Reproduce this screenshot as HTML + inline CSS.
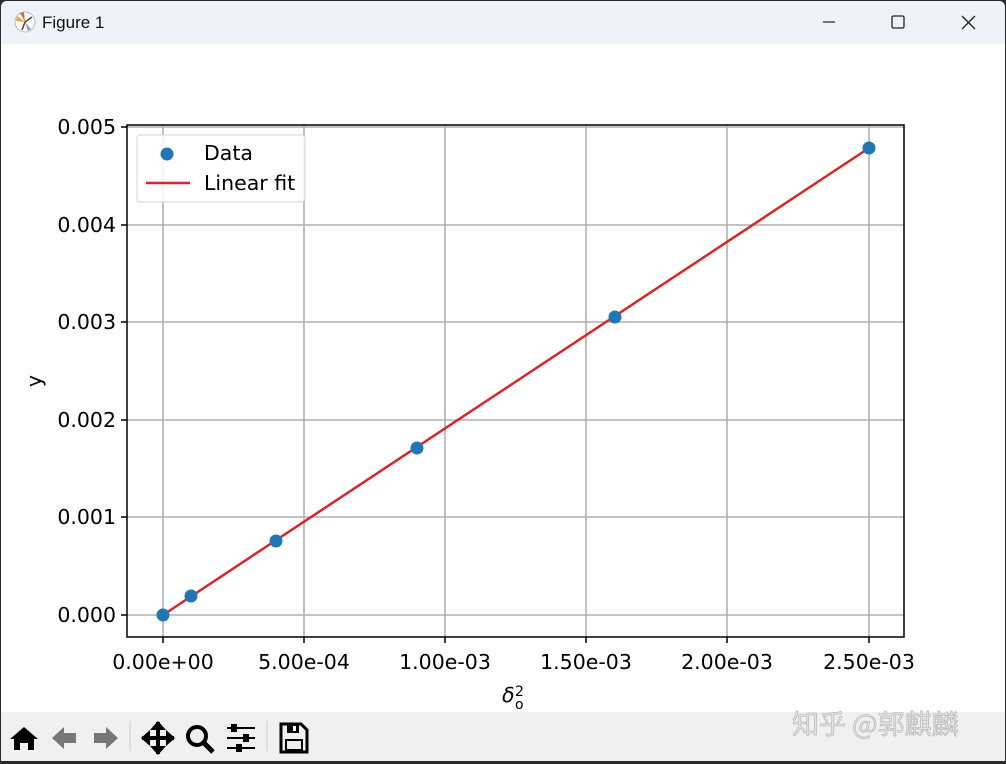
<!DOCTYPE html>
<html><head><style>
html,body{margin:0;padding:0;background:#fff;width:1006px;height:764px;overflow:hidden;font-family:"DejaVu Sans","Liberation Sans",sans-serif;}
</style></head><body>
<svg width="1006" height="764" xmlns="http://www.w3.org/2000/svg" font-family="DejaVu Sans, Liberation Sans, sans-serif">
<rect x="0" y="0" width="1006" height="764" fill="#2b2b2b"/>
<rect x="1" y="1" width="1004" height="760" rx="6" fill="#ffffff"/>
<rect x="1" y="1" width="1004" height="43" rx="6" fill="#eef3f9"/>
<rect x="1" y="20" width="1004" height="24" fill="#eef3f9"/>
<circle cx="25" cy="22" r="10" fill="#fff" stroke="#bbb"/>
<path d="M25 22 L17 16 L16 21Z" fill="#e3a33c"/><path d="M25 22 L20 13 L24 12Z" fill="#d0743a"/><path d="M25 22 L31 29 L28 31Z" fill="#8aa0c8"/><path d="M25 22 L32 17" stroke="#444" stroke-width="1.5"/><path d="M25 22 L22 30" stroke="#444" stroke-width="1.5"/>
<text x="42" y="28" font-family="Liberation Sans, sans-serif" font-size="17" fill="#111">Figure 1</text>
<path d="M823 22h12" stroke="#222" stroke-width="1.2"/>
<rect x="892" y="16" width="12" height="12" rx="1.5" fill="none" stroke="#222" stroke-width="1.3"/>
<path d="M962 16l13 13M975 16l-13 13" stroke="#222" stroke-width="1.3"/>
<g stroke="#b0b0b0" stroke-width="1.6">
<path d="M163 125V637M304 125V637M445 125V637M586 125V637M727 125V637M869 125V637"/>
<path d="M127 615H904M127 517H904M127 420H904M127 322H904M127 225H904M127 127H904"/>
</g>
<rect x="127" y="125" width="777" height="512" fill="none" stroke="#000" stroke-width="1.5"/>
<g stroke="#000" stroke-width="1.5">
<path d="M163 637v6M304 637v6M445 637v6M586 637v6M727 637v6M869 637v6"/>
<path d="M127 615h-6M127 517h-6M127 420h-6M127 322h-6M127 225h-6M127 127h-6"/>
</g>
<g font-size="20.5" fill="#000">
<g text-anchor="middle">
<text x="163" y="669">0.00e+00</text><text x="304" y="669">5.00e-04</text><text x="445" y="669">1.00e-03</text><text x="586" y="669">1.50e-03</text><text x="727" y="669">2.00e-03</text><text x="869" y="669">2.50e-03</text>
</g>
<g text-anchor="end">
<text x="116" y="622">0.000</text><text x="116" y="524">0.001</text><text x="116" y="427">0.002</text><text x="116" y="329">0.003</text><text x="116" y="232">0.004</text><text x="116" y="134">0.005</text>
</g>
<text x="41" y="381" transform="rotate(-90 41 381)" text-anchor="middle">y</text>
<text x="502" y="702" font-style="italic">δ</text>
<text x="515" y="696" font-size="14">2</text><text x="515" y="709" font-size="14">o</text>
</g>
<polyline points="163,615 869,148" fill="none" stroke="#d62728" stroke-width="2.5"/>
<g fill="#1f77b4">
<circle cx="163" cy="615" r="6.5"/><circle cx="191" cy="596" r="6.5"/><circle cx="276" cy="541" r="6.5"/><circle cx="417" cy="448" r="6.5"/><circle cx="615" cy="317" r="6.5"/><circle cx="869" cy="148" r="6.5"/>
</g>
<rect x="137" y="135" width="168" height="67" rx="3" fill="#fff" fill-opacity="0.85" stroke="#d6d6d6"/>
<circle cx="167" cy="154" r="6.5" fill="#1f77b4"/>
<path d="M146 183H190" stroke="#d62728" stroke-width="2.5"/>
<text x="204" y="160" font-size="20.5">Data</text>
<text x="204" y="190" font-size="20.5">Linear fit</text>
<rect x="1" y="712" width="1004" height="49" fill="#f0f0f0"/>
<path d="M10 739L24 727L38 739H34V750H28V743H20V750H14V739Z" fill="#000"/>
<path d="M52 738L64 727V733H76V743H64V749Z" fill="#777"/>
<path d="M118 738L106 727V733H94V743H106V749Z" fill="#777"/>
<path d="M130 721V751M267 721V751" stroke="#ccc"/>
<path d="M158 722V754M142 738H174" stroke="#000" stroke-width="4"/>
<path d="M150 730L158 721L166 730ZM150 746L158 755L166 746ZM150 730L141 738L150 746ZM166 730L175 738L166 746Z" fill="#000"/>
<circle cx="197" cy="736" r="9" fill="none" stroke="#000" stroke-width="4"/>
<path d="M203 742L213 752" stroke="#000" stroke-width="5"/>
<path d="M227 728H255M227 738H255M227 748H255" stroke="#000" stroke-width="2"/>
<rect x="231" y="724" width="6" height="8" fill="#000"/><rect x="243" y="734" width="6" height="8" fill="#000"/><rect x="236" y="744" width="6" height="8" fill="#000"/>
<path d="M281 724H301L307 730V752H281Z" fill="none" stroke="#000" stroke-width="3"/>
<rect x="287" y="724" width="12" height="9" fill="#000"/><rect x="293" y="726" width="3" height="5" fill="#fff"/>
<rect x="286" y="740" width="16" height="10" fill="none" stroke="#000" stroke-width="2"/>
<text x="792" y="734" font-family="Noto Sans CJK SC, sans-serif" font-size="27" fill="#e4e4e4" stroke="#b0b0b0" stroke-width="0.6">知乎 @郭麒麟</text>
</svg>
</body></html>
